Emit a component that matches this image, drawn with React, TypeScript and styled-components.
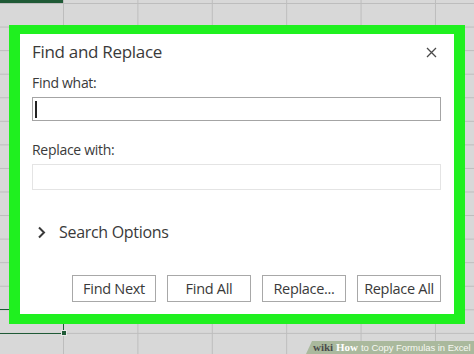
import React from "react";
import styled, { createGlobalStyle } from "styled-components";

const GlobalStyle = createGlobalStyle`
  html, body {
    margin: 0;
    padding: 0;
    background: #d8d8d8;
  }
  * {
    box-sizing: border-box;
  }
`;

const textColor = "#3a3a3a";
const green = "#1ff01f";
const cellLine = "#bdbdbd";
const selectColor = "#1f5a36";

const Sheet = styled.div`
  position: relative;
  width: 474px;
  height: 354px;
  overflow: hidden;
  padding: 25px 0 0 9px;
  background-color: #d8d8d8;
  background-image: linear-gradient(to right, ${cellLine} 1px, transparent 1px),
    linear-gradient(to bottom, ${cellLine} 1px, transparent 1px);
  background-size: 74.4px 23.57px;
  background-position: 63px 3px;
  font-family: "Open Sans", "Noto Sans", sans-serif;
`;

const HeaderMark = styled.div`
  position: absolute;
  top: 0;
  left: 0;
  width: 63px;
  height: 3px;
  background: ${selectColor};
`;

const SelectedCell = styled.div`
  position: absolute;
  left: -2px;
  top: 309px;
  width: 66px;
  height: 25px;
  border: 1.5px solid ${selectColor};
`;

const FillHandle = styled.div`
  position: absolute;
  left: 61px;
  top: 330px;
  width: 6px;
  height: 6px;
  background: ${selectColor};
  border: 1px solid #e8e8e8;
`;

const Dialog = styled.div`
  position: relative;
  width: 456px;
  height: 299px;
  border-style: solid;
  border-color: ${green};
  border-width: 9px 11px 10px 11px;
  background: #ffffff;
  padding: 8px 13px 0 12px;
  display: flex;
  flex-direction: column;
  color: ${textColor};
`;

const TitleRow = styled.div`
  display: flex;
  align-items: flex-start;
  justify-content: space-between;
`;

const Title = styled.div`
  font-size: 17px;
  line-height: 20px;
  letter-spacing: -0.3px;
`;

const CloseButton = styled.div`
  width: 11px;
  height: 11px;
  margin-top: 5px;
  margin-right: 4px;
  display: flex;
`;

const Label = styled.div<{ $top: number }>`
  margin-top: ${(p) => p.$top}px;
  font-size: 14px;
  line-height: 18px;
  letter-spacing: -0.3px;
`;

const Input = styled.div<{ $focused?: boolean; $height: number; $top: number }>`
  margin-top: ${(p) => p.$top}px;
  height: ${(p) => p.$height}px;
  border: ${(p) => (p.$focused ? "1.5px solid #a4a4a4" : "1px solid #e4e4e4")};
  display: flex;
  align-items: center;
  padding-left: 2px;
`;

const Caret = styled.div`
  width: 1.5px;
  height: 17px;
  background: #222;
`;

const OptionsRow = styled.div`
  margin-top: 32px;
  display: flex;
  align-items: center;
  gap: 13px;
  padding-left: 5px;
  font-size: 16px;
  line-height: 20px;
  letter-spacing: -0.3px;
`;

const ButtonRow = styled.div`
  margin-top: 33px;
  display: flex;
  justify-content: flex-end;
  gap: 11px;
`;

const Button = styled.div`
  width: 84px;
  height: 27px;
  border: 1px solid #a8a8a8;
  display: flex;
  align-items: center;
  justify-content: center;
  font-size: 14.5px;
  letter-spacing: -0.3px;
  color: ${textColor};
`;

const Watermark = styled.div`
  position: absolute;
  right: 0;
  bottom: 0;
  width: 168px;
  height: 13px;
  background: #aab99d;
  clip-path: polygon(6px 0, 100% 0, 100% 100%, 0 100%);
  display: flex;
  align-items: center;
  padding-left: 7px;
  font-size: 10px;
  line-height: 13px;
  white-space: nowrap;
`;

const WikiText = styled.span`
  font-family: "Liberation Serif", "DejaVu Serif", serif;
  font-weight: bold;
  font-size: 11px;
  color: #4c4c4c;
  width: 23px;
`;

const HowText = styled.span`
  font-family: "Liberation Serif", "DejaVu Serif", serif;
  font-weight: bold;
  font-size: 11px;
  color: #ffffff;
  width: 25px;
`;

const CaptionText = styled.span`
  font-family: "Liberation Sans", Arial, sans-serif;
  font-size: 9.5px;
  letter-spacing: -0.05px;
  color: #f6f8f2;
`;

function CloseIcon() {
  return (
    <svg width="11" height="11" viewBox="0 0 11 11">
      <path d="M1 1 L10 10 M10 1 L1 10" stroke="#4a4a4a" strokeWidth="1.3" fill="none" />
    </svg>
  );
}

function ChevronIcon() {
  return (
    <svg width="9" height="13" viewBox="0 0 9 13">
      <polyline points="2,1.5 7,6.5 2,11.5" stroke="#3a3a3a" strokeWidth="2" fill="none" />
    </svg>
  );
}

const buttons = ["Find Next", "Find All", "Replace...", "Replace All"];

export default function App() {
  return (
    <>
      <GlobalStyle />
      <Sheet>
        <HeaderMark />
        <SelectedCell />
        <FillHandle />
        <Dialog>
          <TitleRow>
            <Title>Find and Replace</Title>
            <CloseButton>
              <CloseIcon />
            </CloseButton>
          </TitleRow>
          <Label $top={12}>Find what:</Label>
          <Input $focused $height={24} $top={5}>
            <Caret />
          </Input>
          <Label $top={20}>Replace with:</Label>
          <Input $height={26} $top={5} />
          <OptionsRow>
            <ChevronIcon />
            <span>Search Options</span>
          </OptionsRow>
          <ButtonRow>
            {buttons.map((b) => (
              <Button key={b}>{b}</Button>
            ))}
          </ButtonRow>
        </Dialog>
        <Watermark>
          <WikiText>wiki</WikiText>
          <HowText>How</HowText>
          <CaptionText>to Copy Formulas in Excel</CaptionText>
        </Watermark>
      </Sheet>
    </>
  );
}
